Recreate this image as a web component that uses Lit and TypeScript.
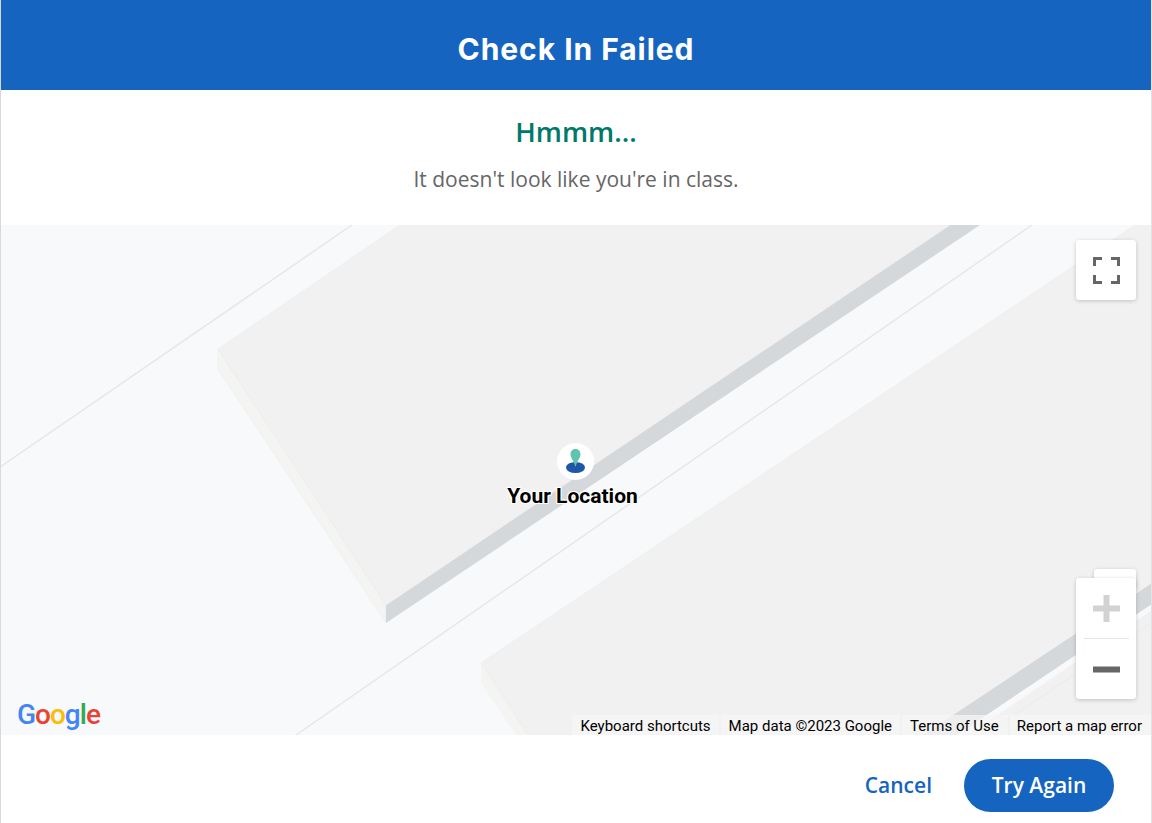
import { LitElement, html, css, svg } from "lit";
import { customElement } from "lit/decorators.js";

const mapArt = svg`
  <rect x="0" y="225" width="1152" height="510" fill="#f8f9fb"/>
  <path d="M0 467 L352 225" stroke="#e6e7e9" stroke-width="1.500" fill="none"/>
  <path d="M296 735 L1032 225" stroke="#e6e7e9" stroke-width="1.500" fill="none"/>
  <polygon points="218,349 386,605 386,623 218,369" fill="#f4f4f2" stroke="#ecedeb" stroke-width=".6"/>
  <polygon points="386,605 950,225 980,225 386,623" fill="#d5d8db"/>
  <polygon points="218,349 400,225 950,225 386,605" fill="#f1f1f1" stroke="#ebebeb" stroke-width=".6"/>
  <polygon points="481,663 481,683 516,735 528,735" fill="#f4f4f2"/>
  <polygon points="481,663 1135,225 1152,225 1152,735 528,735" fill="#f1f1f1" stroke="#ebebeb" stroke-width=".6"/>
  <polygon points="923,735 1152,583 1152,604 957,735" fill="#d5d8db"/>
  <polygon points="957,735 1152,604 1152,610 968,735" fill="#f8f9fb"/>
  <path d="M985 735 L1152 622" stroke="#ebebeb" stroke-width="1" fill="none"/>
`;

@customElement("app-root")
export class AppRoot extends LitElement {
  static styles = css`
    :host {
      display: block;
      width: 1152px;
      height: 823px;
      font-family: "Open Sans", sans-serif;
      background: #fff;
    }
    .card {
      box-sizing: border-box;
      height: 823px;
      display: flex;
      flex-direction: column;
      border-left: 1px solid #d9d9d9;
      border-right: 1px solid #e3e3e3;
    }
    .header {
      box-sizing: border-box;
      height: 90px;
      flex: none;
      padding-top: 7px;
      background: #1565c0;
      display: flex;
      align-items: center;
      justify-content: center;
      color: #fff;
      font-family: "Inter", sans-serif;
      font-weight: 700;
      font-size: 30px;
      letter-spacing: 0.95px;
    }
    .intro {
      height: 135px;
      flex: none;
      box-sizing: border-box;
      padding-top: 23px;
      text-align: center;
    }
    .intro h2 {
      margin: 0;
      font-size: 27.400px;
      line-height: 38px;
      font-weight: 600;
      color: #00796b;
    }
    .intro p {
      margin: 13px 0 0;
      font-size: 21px;
      line-height: 30px;
      color: #666;
    }
    .map {
      position: relative;
      height: 510px;
      flex: none;
      overflow: hidden;
      background: #f8f9fb;
    }
    .art {
      position: absolute;
      inset: 0;
      width: 100%;
      height: 100%;
      display: block;
    }
    .ctl {
      position: absolute;
      background: #fff;
      border-radius: 3px;
      box-shadow: 0 1px 4px rgba(0, 0, 0, 0.2);
    }
    .fs { left: 1075px; top: 15px; width: 60px; height: 60px; }
    .peek { left: 1093px; top: 344px; width: 42px; height: 20px; }
    .zoom {
      left: 1075px;
      top: 353px;
      width: 60px;
      height: 121px;
      display: flex;
      flex-direction: column;
      align-items: center;
    }
    .zoom svg { flex: none; display: block; width: 60px; height: 60px; }
    .zoom hr {
      flex: none;
      width: 45px;
      height: 1px;
      margin: 0;
      border: 0;
      background: #e6e6e6;
    }
    .ctl > svg { display: block; }
    .marker {
      position: absolute;
      left: 506px;
      top: 218px;
      width: 131px;
      display: flex;
      flex-direction: column;
      align-items: center;
    }
    .pin {
      width: 37px;
      height: 37px;
      margin-left: 6px;
      border-radius: 50%;
      background: #fff;
      display: block;
    }
    .label {
      font-family: "Roboto", sans-serif;
      font-weight: 700;
      font-size: 21px;
      line-height: 24px;
      margin-top: 4px;
      color: #000;
      white-space: nowrap;
      text-shadow: -1px -1px 0 #fff, 1px -1px 0 #fff, -1px 1px 0 #fff, 1px 1px 0 #fff;
    }
    .logo {
      position: absolute;
      left: 16px;
      top: 472px;
      font-family: "Roboto", sans-serif;
      font-weight: 500;
      font-size: 28px;
      line-height: 36px;
      letter-spacing: -1px;
      white-space: nowrap;
    }
    .b { color: #4285f4; }
    .r { color: #ea4335; }
    .y { color: #fbbc05; }
    .g { color: #34a853; }
    .attr {
      position: absolute;
      right: 0;
      bottom: 0;
      height: 20px;
      display: flex;
      gap: 2px;
      font-family: "Roboto", sans-serif;
      font-size: 15px;
      line-height: 22px;
      color: #000;
      white-space: nowrap;
    }
    .attr span {
      background: rgba(245, 245, 245, 0.75);
      padding: 0 8px;
    }
    .attr span:nth-child(3) { padding: 0 9px 0 8px; }
    .attr span:last-child { padding: 0 9px 0 7px; }
    .actions {
      flex: 1;
      display: flex;
      align-items: flex-start;
      justify-content: flex-end;
      gap: 32px;
      padding: 24px 37px 0 0;
    }
    button {
      font-family: "Open Sans", sans-serif;
      font-weight: 600;
      font-size: 21px;
      border: 0;
      cursor: pointer;
    }
    .cancel {
      background: none;
      color: #1565c0;
      height: 53px;
      padding: 0 0 2px;
    }
    .try {
      background: #1565c0;
      color: #fff;
      width: 150px;
      height: 53px;
      border-radius: 27px;
      padding: 0 0 2px;
    }
  `;

  render() {
    return html`
      <div class="card">
        <div class="header">Check In Failed</div>
        <div class="intro">
          <h2>Hmmm...</h2>
          <p>It doesn't look like you're in class.</p>
        </div>
        <div class="map">
          <svg class="art" viewBox="1 225 1150 510" preserveAspectRatio="none">${mapArt}</svg>
          <div class="ctl fs">
            <svg width="60" height="60" viewBox="0 0 60 60" fill="none" stroke="#666" stroke-width="3">
              <path d="M18.500 26V18.500H26M35 18.500H42.500V26M42.500 35V42.500H35M26 42.500H18.500V35"/>
            </svg>
          </div>
          <div class="ctl peek"></div>
          <div class="ctl zoom">
            <svg viewBox="0 0 60 60">
              <path d="M30.500 17V44M17 30.500H44" stroke="#d2d2d2" stroke-width="6" fill="none"/>
            </svg>
            <hr />
            <svg viewBox="0 0 60 60">
              <path d="M17 30.500H44" stroke="#666" stroke-width="6" fill="none"/>
            </svg>
          </div>
          <div class="marker">
            <svg class="pin" viewBox="0 0 37 37">
              <ellipse cx="18.500" cy="24.500" rx="9.500" ry="5.500" fill="#1f57a8"/>
              <path d="M18.500 6C15 6 13.500 8.500 13.500 11.500C13.500 15 17 18 18.500 24C20 18 23.500 15 23.500 11.500C23.500 8.500 22 6 18.500 6Z" fill="#5fc4ab"/>
            </svg>
            <div class="label">Your Location</div>
          </div>
          <div class="logo"><span class="b">G</span><span class="r">o</span><span class="y">o</span><span class="b">g</span><span class="g">l</span><span class="r">e</span></div>
          <div class="attr">
            <span>Keyboard shortcuts</span><span>Map data ©2023 Google</span><span>Terms of Use</span><span>Report a map error</span>
          </div>
        </div>
        <div class="actions">
          <button class="cancel">Cancel</button>
          <button class="try">Try Again</button>
        </div>
      </div>
    `;
  }
}
